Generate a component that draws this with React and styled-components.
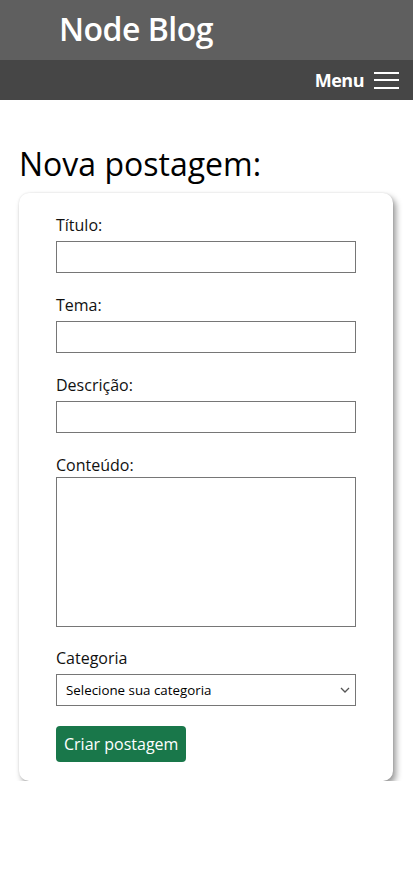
import React from "react";
import styled, { createGlobalStyle } from "styled-components";

const Global = createGlobalStyle`
  * { box-sizing: border-box; }
  body { margin: 0; font-family: "Open Sans", "Noto Sans", sans-serif; background: #fff; color: #000; }
`;

const TopBar = styled.header`
  height: 60px;
  background: #5f5f5f;
  display: flex;
  align-items: center;
  padding-left: 59px;
`;

const Logo = styled.h1`
  margin: 0;
  color: #fff;
  font-size: 32px;
  font-weight: 600;
  letter-spacing: -0.5px;
  line-height: 1;
  padding-bottom: 2px;
`;

const NavBar = styled.nav`
  height: 40px;
  background: #464646;
  display: flex;
  align-items: center;
  justify-content: flex-end;
  padding-right: 14px;
  gap: 10px;
`;

const MenuLabel = styled.span`
  color: #fff;
  font-weight: 700;
  font-size: 18px;
  letter-spacing: -0.5px;
`;

const Burger = styled.span`
  display: flex;
  flex-direction: column;
  gap: 5.5px;
  width: 25px;
  & > i { display: block; height: 2px; background: #fff; }
`;

const Main = styled.main`
  padding: 42px 20px 0 19px;
`;

const Heading = styled.h2`
  margin: 0 0 7px 0;
  font-size: 32px;
  font-weight: 400;
  line-height: 44px;
`;

const Card = styled.form`
  width: 374px;
  background: #fff;
  border-radius: 10px;
  box-shadow: 3px 4px 6px rgba(0,0,0,0.4), 0 0 2px rgba(0,0,0,0.12);
  padding: 20px 37px 19px 37px;
  display: flex;
  flex-direction: column;
`;

const Field = styled.div`
  display: flex;
  flex-direction: column;
  margin-bottom: ${p => p.$mb ?? 20}px;
`;

const Label = styled.label`
  font-size: 16px;
  line-height: 24px;
  margin-bottom: ${p => p.$gap ?? 4}px;
  color: #111;
`;

const Input = styled.input`
  width: 300px;
  height: 32px;
  border: 1px solid #767676;
  border-radius: 0;
  margin: 0;
  font-family: inherit;
`;

const TextArea = styled.textarea`
  width: 300px;
  height: 150px;
  border: 1px solid #767676;
  border-radius: 0;
  margin: 0;
  resize: none;
  font-family: inherit;
`;

const SelectBox = styled.div`
  position: relative;
  width: 300px;
  height: 32px;
`;

const Select = styled.select`
  width: 300px;
  height: 32px;
  appearance: none;
  border: 1px solid #767676;
  border-radius: 0;
  background: #fff;
  font-family: "Open Sans", sans-serif;
  font-size: 13.33px;
  padding: 0 0 0 9px;
  color: #000;
`;

const Chevron = styled.svg`
  position: absolute;
  right: 6px;
  top: 13px;
  pointer-events: none;
`;

const Button = styled.button`
  align-self: flex-start;
  background: #19774a;
  color: #fff;
  border: none;
  border-radius: 4px;
  height: 36px;
  padding: 0 8px;
  font-family: inherit;
  font-size: 16px;
  margin-top: 20px;
`;

export default function App() {
  return (
    <>
      <Global />
      <TopBar><Logo>Node Blog</Logo></TopBar>
      <NavBar>
        <MenuLabel>Menu</MenuLabel>
        <Burger><i /><i /><i /></Burger>
      </NavBar>
      <Main>
        <Heading>Nova postagem:</Heading>
        <Card onSubmit={e => e.preventDefault()}>
          <Field>
            <Label>Título:</Label>
            <Input />
          </Field>
          <Field>
            <Label>Tema:</Label>
            <Input />
          </Field>
          <Field>
            <Label>Descrição:</Label>
            <Input />
          </Field>
          <Field $mb={19}>
            <Label $gap={0}>Conteúdo:</Label>
            <TextArea />
          </Field>
          <Field $mb={0}>
            <Label>Categoria</Label>
            <SelectBox>
              <Select defaultValue="">
                <option value="">Selecione sua categoria</option>
              </Select>
              <Chevron width="10" height="6" viewBox="0 0 10 6">
                <path d="M1 1 L5 5 L9 1" fill="none" stroke="#555" strokeWidth="1.3" />
              </Chevron>
            </SelectBox>
          </Field>
          <Button type="submit">Criar postagem</Button>
        </Card>
      </Main>
    </>
  );
}
